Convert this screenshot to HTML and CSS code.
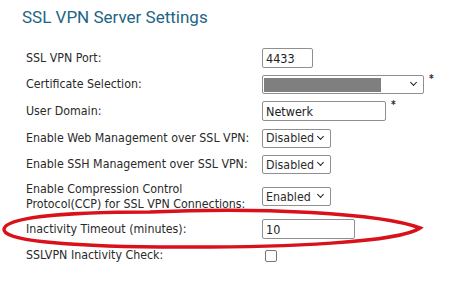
FILE: index.html
```html
<!DOCTYPE html>
<html lang="en">
<head>
    <meta charset="UTF-8">
    <title>SSL VPN Server Settings</title>
    <link rel="stylesheet" href="styles.css">
</head>
<body>
    <div class="page">
        <h2>SSL VPN Server Settings</h2>
        <div class="settings">
            <div class="row">
                <label>SSL VPN Port:</label>
                <input type="text" class="port" value="4433">
            </div>
            <div class="row">
                <label>Certificate Selection:</label>
                <div class="field">
                    <div class="select cert"><span class="hidden-val"></span><span class="caret"></span></div>
                    <span class="req">*</span>
                </div>
            </div>
            <div class="row">
                <label>User Domain:</label>
                <div class="field">
                    <input type="text" class="domain" value="Netwerk">
                    <span class="req">*</span>
                </div>
            </div>
            <div class="row">
                <label>Enable Web Management over SSL VPN:</label>
                <div class="select small">Disabled<span class="caret"></span></div>
            </div>
            <div class="row">
                <label>Enable SSH Management over SSL VPN:</label>
                <div class="select small">Disabled<span class="caret"></span></div>
            </div>
            <div class="row tall">
                <label>Enable Compression Control<br>Protocol(CCP) for SSL VPN Connections:</label>
                <div class="select small">Enabled<span class="caret"></span></div>
            </div>
            <div class="row">
                <label>Inactivity Timeout (minutes):</label>
                <input type="text" class="timeout" value="10">
            </div>
            <div class="row">
                <label>SSLVPN Inactivity Check:</label>
                <span class="check"></span>
            </div>
        </div>

        <!-- hand-drawn highlight around the timeout row -->
        <svg class="circle" width="474" height="282" viewBox="0 0 474 282">
            <path d="M150 212 C 260 207, 380 213, 420 228 C 400 242, 290 248, 160 247 C 60 246, 2 240, 4 229 C 6 218, 60 212, 150 212 Z"
                  fill="none" stroke="#d9111b" stroke-width="3.5"/>
        </svg>
    </div>
</body>
</html>
```

FILE: styles.css
```css
body {
    margin: 0;
    background: #fff;
    font-family: "DejaVu Sans Condensed", "Liberation Sans", Arial, sans-serif;
    color: #2a2a2a;
}
.page {
    position: relative;
    width: 474px;
    height: 282px;
    overflow: hidden;
}
h2 {
    margin: 0;
    padding: 7px 0 0 22px;
    font-family: Roboto, sans-serif;
    font-weight: 400;
    font-size: 17px;
    color: #1d6584;
    height: 45px;
    box-sizing: border-box;
}
.settings {
    padding-left: 26px;
    font-size: 12.3px;
}
.row {
    display: grid;
    grid-template-columns: 236px auto;
    align-items: center;
    height: 26.6px;
}
.row.tall {
    height: 38px;
}
label {
    line-height: 15px;
    white-space: nowrap;
}
.field {
    display: flex;
    align-items: flex-start;
}
input {
    font-family: inherit;
    font-size: 12.5px;
    color: #222;
    border: 1px solid #8f8f8f;
    border-radius: 2px;
    height: 20px;
    box-sizing: border-box;
    padding: 0 3px;
    margin: 0;
}
.port { width: 51px; }
.domain { width: 124px; }
.timeout { width: 93px; }
.select {
    display: flex;
    align-items: center;
    box-sizing: border-box;
    height: 19px;
    border: 1px solid #8f8f8f;
    border-radius: 2px;
    padding: 0 4px 0 3px;
    font-size: 12.3px;
}
.select.small {
    width: 69px;
    justify-content: space-between;
}
.select.cert {
    width: 162px;
    padding-left: 1px;
}
.hidden-val {
    width: 117px;
    height: 14px;
    background: #7f7f7f;
}
.cert .caret {
    margin-left: auto;
}
.caret {
    width: 4px;
    height: 4px;
    border-right: 1.6px solid #222;
    border-bottom: 1.6px solid #222;
    transform: rotate(45deg);
    margin-top: -4px;
    margin-right: 3px;
}
.req {
    font-size: 10px;
    font-weight: 700;
    margin-left: 5px;
    line-height: 8px;
}
.check {
    width: 12px;
    height: 12px;
    box-sizing: border-box;
    border: 1px solid #767676;
    border-radius: 2px;
    margin-left: 3px;
}
.circle {
    position: absolute;
    left: 0;
    top: 0;
}
```
